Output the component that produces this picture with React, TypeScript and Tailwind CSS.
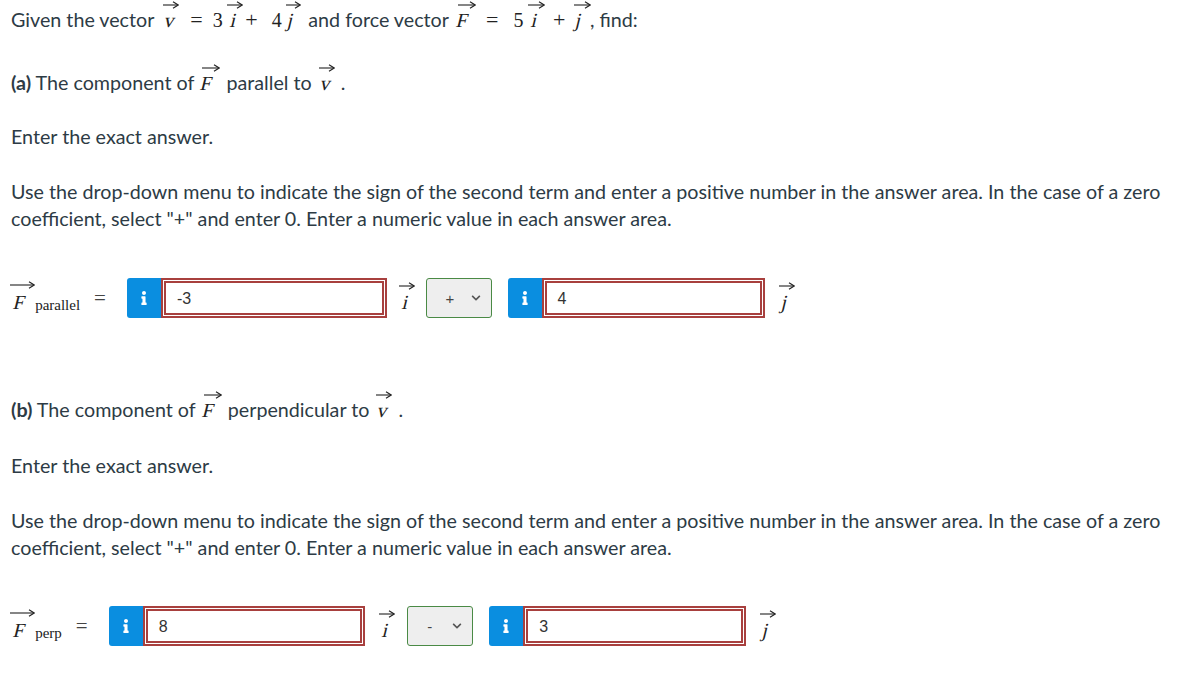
import { FaInfo, FaChevronDown } from "react-icons/fa";

const SERIF = "font-['Liberation_Serif','Times_New_Roman',serif]";

function Arrow({ w }: { w: number }) {
  return (
    <svg width={w} height="8" viewBox={`0 0 ${w} 8`} className="block">
      <line x1="0" y1="4" x2={w - 1} y2="4" stroke="#222" strokeWidth="1.1" />
      <path d={`M${w - 6} 0.8 L${w - 0.8} 4 L${w - 6} 7.2`} fill="none" stroke="#222" strokeWidth="1.1" />
    </svg>
  );
}

// letter with an arrow over it
function Vec({ l, w = 17, top = -9, left = 0, className = "" }: { l: string; w?: number; top?: number; left?: number; className?: string }) {
  return (
    <span className={`relative inline-block ${SERIF} text-[20px] leading-none text-[#222] ${className}`}>
      <span className="absolute" style={{ top, left }}>
        <Arrow w={w} />
      </span>
      <span className="inline-block -skew-x-[14deg] not-italic">{l}</span>
    </span>
  );
}

function M({ children, className = "" }: { children: React.ReactNode; className?: string }) {
  return <span className={`inline-block ${SERIF} leading-none text-[#222] ${className}`}>{children}</span>;
}

function AnswerBox({ value, width }: { value: string; width: number }) {
  return (
    <div className="flex h-[40px]">
      <div className="flex w-[34px] items-center justify-center rounded-l-[3px] bg-[#0a8ee0] text-white">
        <FaInfo size={14} />
      </div>
      <div
        className="flex items-center border-2 border-[#a8403e] bg-white pl-[14px] shadow-[inset_0_0_0_1px_#fff,inset_0_0_0_3px_#a8403e] font-['Liberation_Sans',Arial,sans-serif] text-[16px] text-[#333]"
        style={{ width }}
      >
        {value}
      </div>
    </div>
  );
}

function SignSelect({ sign }: { sign: string }) {
  return (
    <div className="flex h-[40px] w-[66px] items-center justify-between rounded-[3px] border border-[#4a8a45] bg-[#eeeeee] pl-[19px] pr-[10px] font-['Liberation_Sans',Arial,sans-serif] text-[15px] text-[#444]">
      <span>{sign}</span>
      <FaChevronDown size={10} className="text-[#555]" />
    </div>
  );
}

type RowProps = { sub: string; a: string; sign: string; b: string; lw: number; rw: number; iGap: string };

function AnswerRow({ sub, a, sign, b, lw, rw, iGap }: RowProps) {
  return (
    <div className="flex items-center pl-[3px]">
      <span className="flex items-end">
        <Vec l="F" w={25} top={-11} left={-4} />
        <span className={`${SERIF} text-[15px] text-[#222] ml-[10px] translate-y-[7px]`}>{sub}</span>
      </span>
      <span className={`${SERIF} text-[21px] text-[#444] ml-[14px] mr-[21px]`}>=</span>
      <AnswerBox value={a} width={lw} />
      <span className={`${iGap} pt-[6px]`}>
        <Vec l="i" w={16} top={-10} left={-4} />
      </span>
      <SignSelect sign={sign} />
      <span className="w-[16px]" />
      <AnswerBox value={b} width={rw} />
      <span className="ml-[17px] pt-[6px]">
        <Vec l="j" w={16} top={-10} left={-3} />
      </span>
    </div>
  );
}

const INSTRUCTIONS =
  'Use the drop-down menu to indicate the sign of the second term and enter a positive number in the answer area. In the case of a zero coefficient, select "+" and enter 0. Enter a numeric value in each answer area.';

export default function App() {
  return (
    <main className="min-h-screen bg-white pl-[11px] pr-[12px] pt-[6px] font-['Lato','Open_Sans',sans-serif] text-[19.7px] leading-[27px] text-[#2d3b45]">
      <p className="mb-[36px]">
        Given the vector
        <Vec l="v" w={16} left={-2} className="ml-[11px]" />
        <M className="ml-[15px] text-[22px]">=</M>
        <M className="ml-[10px] text-[20px]">3</M>
        <Vec l="i" w={16} left={-4} className="ml-[8px]" />
        <M className="ml-[9px] text-[22px]">+</M>
        <M className="ml-[14px] text-[20px]">4</M>
        <Vec l="j" w={15} left={-2} className="ml-[6px]" />
        <span className="ml-[15px]">and force vector</span>
        <Vec l="F" w={18} left={1} className="ml-[8px]" />
        <M className="ml-[18px] text-[22px]">=</M>
        <M className="ml-[15px] text-[20px]">5</M>
        <Vec l="i" w={17} left={-4} className="ml-[9px]" />
        <M className="ml-[15px] text-[22px]">+</M>
        <Vec l="j" w={17} left={-2} className="ml-[11px]" />
        <span className="ml-[8px]">, find:</span>
      </p>

      <p className="mb-[27px]">
        <span className="font-bold">(a)</span> The component of
        <Vec l="F" w={18} left={1} className="ml-[7px]" />
        <span className="ml-[14px]">parallel to</span>
        <Vec l="v" w={16} left={-2} className="ml-[9px]" />
        <span className="ml-[10px]">.</span>
      </p>
      <p className="mb-[28px]">Enter the exact answer.</p>
      <p className="mb-[46px]">{INSTRUCTIONS}</p>

      <AnswerRow sub="parallel" a="-3" sign="+" b="4" lw={226} rw={223} iGap="ml-[16px] mr-[17px]" />

      <p className="mt-[78px] mb-[29px]">
        <span className="font-bold">(b)</span> The component of
        <Vec l="F" w={18} left={1} className="ml-[7px]" />
        <span className="ml-[14px]">perpendicular to</span>
        <Vec l="v" w={16} left={-2} className="ml-[9px]" />
        <span className="ml-[10px]">.</span>
      </p>
      <p className="mb-[28px]">Enter the exact answer.</p>
      <p className="mb-[45px]">{INSTRUCTIONS}</p>

      <AnswerRow sub="perp" a="8" sign="-" b="3" lw={222} rw={223} iGap="ml-[18px] mr-[19px]" />
    </main>
  );
}
